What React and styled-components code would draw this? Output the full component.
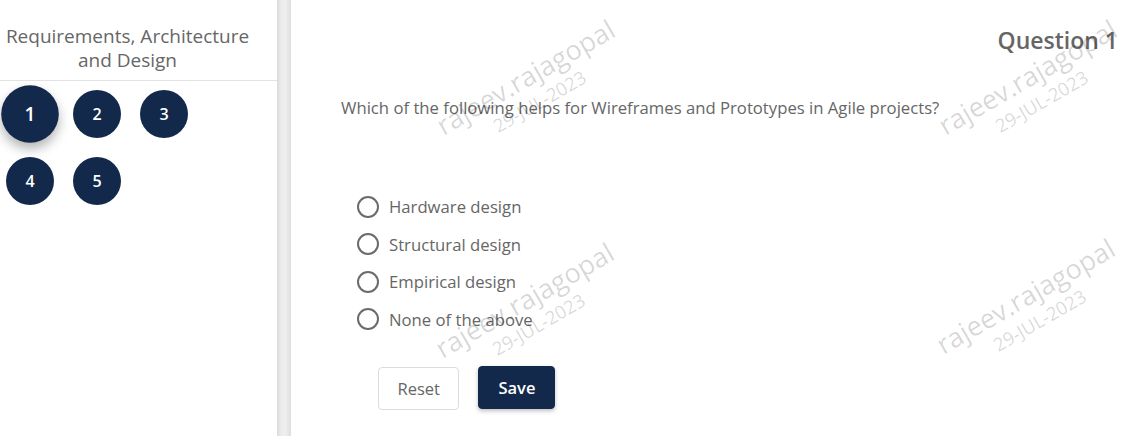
import React from "react";
import styled, { createGlobalStyle } from "styled-components";

const NAVY = "#13294b";

const Global = createGlobalStyle`
  html, body { margin: 0; padding: 0; background: #fff; }
  body { font-family: "Open Sans", "Noto Sans", sans-serif; color: #666; }
  * { box-sizing: border-box; }
`;

const Page = styled.div`
  display: flex;
  width: 1143px;
  height: 436px;
  position: relative;
  overflow: hidden;
  background: #fff;
`;

const Sidebar = styled.aside`
  width: 277px;
  flex: none;
  display: flex;
  flex-direction: column;
`;

const SectionTitle = styled.h2`
  margin: 0;
  padding: 24px 22px 8px 0;
  font-size: 19px;
  line-height: 24px;
  font-weight: 400;
  color: #666;
  text-align: center;
  border-bottom: 1px solid #e2e2e2;
`;

const NumberGrid = styled.div`
  display: grid;
  grid-template-columns: repeat(3, 48px);
  column-gap: 19px;
  row-gap: 19px;
  padding: 9px 0 0 6px;
`;

const NumberButton = styled.button`
  width: 48px;
  height: 48px;
  border-radius: 50%;
  border: none;
  padding: 0;
  background: ${NAVY};
  color: #fff;
  font-family: "Open Sans", sans-serif;
  font-size: 16px;
  font-weight: 600;
  display: flex;
  align-items: center;
  justify-content: center;
  transform: ${(p) => (p.$active ? "scale(1.2)" : "none")};
  box-shadow: ${(p) => (p.$active ? "0 5px 10px rgba(0,0,0,0.3)" : "none")};
`;

const Gutter = styled.div`
  width: 14px;
  flex: none;
  background: linear-gradient(to right, #d9d9d9, #ececec 30%, #efefef 60%, #dedede);
`;

const Main = styled.main`
  flex: 1;
  display: flex;
  flex-direction: column;
  padding: 24px 25px 0 50px;
`;

const QuestionNo = styled.h1`
  margin: 0;
  align-self: flex-end;
  font-size: 23px;
  line-height: 32px;
  font-weight: 600;
  color: #666;
`;

const QuestionText = styled.p`
  margin: 41px 0 0 0;
  font-size: 16.7px;
  line-height: 22px;
  color: #666;
`;

const Options = styled.div`
  display: flex;
  flex-direction: column;
  gap: 12px;
  margin: 75px 0 0 16px;
`;

const Option = styled.label`
  display: flex;
  align-items: center;
  gap: 10px;
  height: 25.5px;
  font-size: 16.7px;
  color: #666;
`;

const Radio = styled.span`
  width: 22px;
  height: 22px;
  border-radius: 50%;
  border: 2px solid #6b6b6b;
  flex: none;
`;

const Actions = styled.div`
  display: flex;
  gap: 19px;
  margin: 35px 0 0 37px;
  align-items: flex-start;
`;

const Button = styled.button`
  height: 43px;
  padding: 0 ${(p) => (p.$primary ? "19px" : "18.5px")};
  border-radius: 4px;
  font-family: "Open Sans", sans-serif;
  font-size: 16.5px;
  font-weight: ${(p) => (p.$primary ? 600 : 400)};
  color: ${(p) => (p.$primary ? "#fff" : "#666")};
  background: ${(p) => (p.$primary ? NAVY : "#fff")};
  border: 1px solid ${(p) => (p.$primary ? NAVY : "#dcdcdc")};
  box-shadow: ${(p) => (p.$primary ? "0 2px 4px rgba(0,0,0,0.25)" : "none")};
  margin-top: ${(p) => (p.$primary ? "-1px" : "0")};
`;

const Stamp = styled.div`
  position: absolute;
  left: ${(p) => p.$x}px;
  top: ${(p) => p.$y}px;
  width: 260px;
  margin-left: -130px;
  transform: rotate(-30deg);
  transform-origin: 50% 30%;
  text-align: center;
  color: rgba(0, 0, 0, 0.16);
  pointer-events: none;
  font-family: "Open Sans", sans-serif;
`;

const StampName = styled.div`
  font-size: 27px;
  line-height: 30px;
`;

const StampDate = styled.div`
  font-size: 18.5px;
  line-height: 20px;
  margin-top: 3px;
`;

const stamps = [
  { x: 526, y: 62 },
  { x: 1028, y: 62 },
  { x: 525, y: 285 },
  { x: 1026, y: 281 },
];

const options = ["Hardware design", "Structural design", "Empirical design", "None of the above"];

export default function App() {
  return (
    <>
      <Global />
      <Page>
        <Sidebar>
          <SectionTitle>Requirements, Architecture and Design</SectionTitle>
          <NumberGrid>
            {[1, 2, 3, 4, 5].map((n) => (
              <NumberButton key={n} $active={n === 1}>{n}</NumberButton>
            ))}
          </NumberGrid>
        </Sidebar>
        <Gutter />
        <Main>
          <QuestionNo>Question 1</QuestionNo>
          <QuestionText>
            Which of the following helps for Wireframes and Prototypes in Agile projects?
          </QuestionText>
          <Options>
            {options.map((o) => (
              <Option key={o}>
                <Radio />
                {o}
              </Option>
            ))}
          </Options>
          <Actions>
            <Button>Reset</Button>
            <Button $primary>Save</Button>
          </Actions>
        </Main>
        {stamps.map((s, i) => (
          <Stamp key={i} $x={s.x} $y={s.y}>
            <StampName>rajeev.rajagopal</StampName>
            <StampDate>29-JUL-2023</StampDate>
          </Stamp>
        ))}
      </Page>
    </>
  );
}
